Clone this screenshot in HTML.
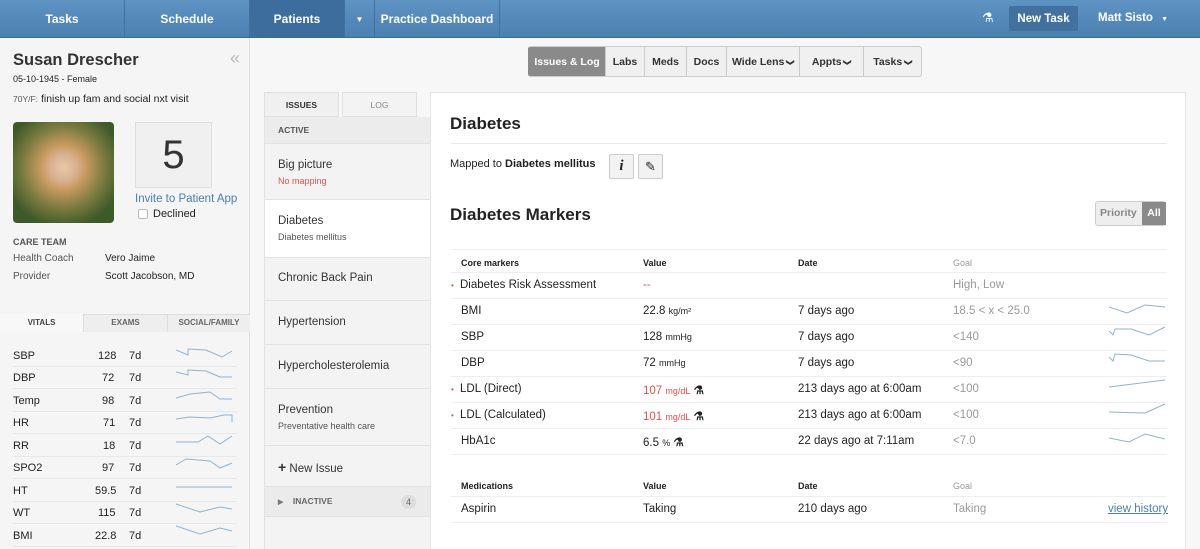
<!DOCTYPE html>
<html><head><meta charset="utf-8"><style>
*{box-sizing:border-box;margin:0;padding:0}
html,body{width:1200px;height:549px;overflow:hidden}
body{font-family:"Liberation Sans",Arial,sans-serif;background:#f7f7f7;color:#222;position:relative;font-size:12px}
.a{position:absolute;white-space:nowrap}
#nav{position:absolute;left:0;top:0;width:1200px;height:38px;background:linear-gradient(#5e93c2,#4b80b2);border-bottom:1px solid #3b6c98}
.ni{position:absolute;top:0;height:37px;line-height:39px;color:#fff;font-weight:bold;font-size:12px;text-align:center;border-right:1px solid #3f72a0;white-space:nowrap}
#side{position:absolute;left:0;top:38px;width:250px;height:511px;background:#f5f5f5;border-right:1px solid #ddd}
.vr{position:absolute;left:13px;width:224px;height:22px;border-bottom:1px solid #e8e8e8;font-size:11px}
.vr span{position:absolute;top:5px}
.it{position:absolute;left:264px;width:166px;border-bottom:1px solid #e2e2e2;background:#f3f3f3;border-left:1px solid #e2e2e2;white-space:nowrap}
.it b{position:absolute;left:13px;font-weight:normal;font-size:11.5px;color:#333}
.it i{position:absolute;left:13px;font-style:normal;font-size:9px;color:#555}
#main{position:absolute;left:430px;top:92px;width:756px;height:457px;background:#fff;border:1px solid #e4e4e4;border-bottom:none}
.tr{position:absolute;left:20px;width:716px;height:26px;border-bottom:1px solid #eee;font-size:11.5px;white-space:nowrap}
.tr span{position:absolute;top:6px}
.th{font-size:9px;font-weight:bold;top:8px!important}
.g{color:#999}.r{color:#d9534f}
small{font-size:9px}
.btn{position:absolute;top:46px;height:31px;line-height:31px;font-size:10.5px;font-weight:bold;color:#333;background:#f0f0f0;border:1px solid #ccc;border-left:none;text-align:center;white-space:nowrap}
.btn b{font-size:8px;display:inline-block;transform:rotate(90deg)}
</style></head><body>
<div id="nav">
<div class="ni" style="left:0;width:125px">Tasks</div>
<div class="ni" style="left:125px;width:125px">Schedule</div>
<div class="ni" style="left:250px;width:95px;background:#3d6d9c">Patients</div>
<div class="ni" style="left:345px;width:30px;font-size:8px">▼</div>
<div class="ni" style="left:375px;width:125px">Practice Dashboard</div>
<div class="a" style="left:982px;top:10px;color:#fff;font-size:13px">⚗</div>
<div class="a" style="left:1009px;top:6px;width:69px;height:25px;line-height:26px;background:#42719f;color:#fff;font-weight:bold;text-align:center;font-size:11.5px;border-radius:2px">New Task</div>
<div class="a" style="left:1098px;top:12px;color:#fff;font-weight:bold;font-size:11.5px">Matt Sisto <span style="font-size:7px;margin-left:5px">▼</span></div>
</div>
<div id="side">
<div class="a" style="left:13px;top:13px;font-size:16.5px;font-weight:bold;color:#333">Susan Drescher</div>
<div class="a" style="left:230px;top:10px;font-size:18px;color:#bbb">«</div>
<div class="a" style="left:13px;top:36px;font-size:9px">05-10-1945 - Female</div>
<div class="a" style="left:13px;top:55px;font-size:10.5px"><span style="font-size:8.5px;color:#555">70Y/F:</span> finish up fam and social nxt visit</div>
<div class="a" style="left:13px;top:84px;width:101px;height:101px;border-radius:4px;background:radial-gradient(circle at 50% 45%,#e8c8a8 0,#d8b090 18%,#c89a60 30%,#7a7a40 55%,#3d5a28 80%)"></div>
<div class="a" style="left:135px;top:84px;width:77px;height:66px;background:#f0f0f0;border:1px solid #ddd;font-size:40px;font-weight:300;text-align:center;line-height:64px;color:#333">5</div>
<div class="a" style="left:135px;top:155px;font-size:11.5px;color:#4a7fb0">Invite to Patient App</div>
<div class="a" style="left:138px;top:171px;width:10px;height:10px;border:1px solid #bbb;border-radius:2px;background:#fff"></div>
<div class="a" style="left:153px;top:170px;font-size:11px">Declined</div>
<div class="a" style="left:13px;top:199px;font-size:9px;font-weight:bold;color:#555">CARE TEAM</div>
<div class="a" style="left:13px;top:215px;font-size:10px;color:#555">Health Coach</div>
<div class="a" style="left:105px;top:215px;font-size:10px">Vero Jaime</div>
<div class="a" style="left:13px;top:233px;font-size:10px;color:#555">Provider</div>
<div class="a" style="left:105px;top:233px;font-size:10px">Scott Jacobson, MD</div>
<div class="a" style="left:0;top:276px;width:250px;height:18px;border-top:1px solid #ddd;background:#eee"></div>
<div class="a" style="left:0;top:276px;width:83px;height:18px;background:#f8f8f8;text-align:center;font-size:8px;font-weight:bold;line-height:18px;color:#444">VITALS</div>
<div class="a" style="left:83px;top:276px;width:84px;height:18px;border-left:1px solid #ddd;text-align:center;font-size:8px;font-weight:bold;line-height:18px;color:#666">EXAMS</div>
<div class="a" style="left:167px;top:276px;width:83px;height:18px;border-left:1px solid #ddd;text-align:center;font-size:8px;font-weight:bold;line-height:18px;color:#666">SOCIAL/FAMILY</div>
</div>
<div class="a" style="left:264px;top:92px;width:75px;height:25px;background:#f0f0f0;border:1px solid #e0e0e0;text-align:center;line-height:25px;font-size:8.5px;font-weight:bold;color:#333">ISSUES</div>
<div class="a" style="left:342px;top:92px;width:75px;height:25px;background:#f3f3f3;border:1px solid #e0e0e0;text-align:center;line-height:25px;font-size:8.5px;color:#888">LOG</div>
<div class="it" style="top:117px;height:27px;background:#ececec"><b style="top:8px;font-size:8.5px;font-weight:bold;color:#555">ACTIVE</b></div>
<div class="it" style="top:144px;height:56px"><b style="top:15px">Big picture</b><i style="top:32px;color:#d9534f">No mapping</i></div>
<div class="it" style="top:200px;height:58px;background:#fff"><b style="top:15px">Diabetes</b><i style="top:32px">Diabetes mellitus</i></div>
<div class="it" style="top:258px;height:43px"><b style="top:14px">Chronic Back Pain</b></div>
<div class="it" style="top:301px;height:44px"><b style="top:15px">Hypertension</b></div>
<div class="it" style="top:345px;height:44px"><b style="top:15px">Hypercholesterolemia</b></div>
<div class="it" style="top:389px;height:57px"><b style="top:15px">Prevention</b><i style="top:32px">Preventative health care</i></div>
<div class="it" style="top:446px;height:41px"><b style="top:13px"><span style="font-weight:bold;font-size:14px">+</span> New Issue</b></div>
<div class="it" style="top:487px;height:30px;background:#ebebeb"><b style="top:9px;font-size:8.5px;font-weight:bold;color:#666"><span style="font-size:7px;color:#777">▶</span>&nbsp;&nbsp;&nbsp; INACTIVE</b><span class="a" style="left:136px;top:8px;width:15px;height:14px;border-radius:7px;background:#ddd;font-size:9px;text-align:center;line-height:14px;color:#666">4</span></div>
<div class="it" style="top:517px;height:40px;background:#f3f3f3"></div>
<div class="btn" style="left:528px;width:78px;background:#8a8a8a;color:#fff;border-left:1px solid #888;border-radius:3px 0 0 3px">Issues &amp; Log</div>
<div class="btn" style="left:606px;width:39px">Labs</div>
<div class="btn" style="left:645px;width:42px">Meds</div>
<div class="btn" style="left:687px;width:40px">Docs</div>
<div class="btn" style="left:727px;width:73px">Wide Lens <b>&#10095;</b></div>
<div class="btn" style="left:800px;width:64px">Appts <b>&#10095;</b></div>
<div class="btn" style="left:864px;width:58px;border-radius:0 3px 3px 0">Tasks <b>&#10095;</b></div>
<div id="main">
<div class="a" style="left:19px;top:21px;font-size:17px;font-weight:bold">Diabetes</div>
<div class="a" style="left:20px;top:50px;width:716px;height:1px;background:#e8e8e8"></div>
<div class="a" style="left:19px;top:65px;font-size:11px">Mapped to <b>Diabetes mellitus</b></div>
<div class="a" style="left:178px;top:61px;width:25px;height:25px;border:1px solid #ccc;background:#f2f2f2;border-radius:2px;text-align:center;line-height:23px;font-weight:bold;font-style:italic;font-family:'Liberation Serif',serif;font-size:15px">i</div>
<div class="a" style="left:207px;top:61px;width:25px;height:25px;border:1px solid #ccc;background:#f2f2f2;border-radius:2px;text-align:center;line-height:23px;font-size:13px">✎</div>
<div class="a" style="left:19px;top:112px;font-size:17px;font-weight:bold">Diabetes Markers</div>
<div class="a" style="left:664px;top:108px;width:71px;height:25px;border:1px solid #ccc;border-radius:3px;background:#eee;font-size:10.5px;font-weight:bold;line-height:23px;color:#888"><span style="padding-left:4px">Priority</span><span class="a" style="left:46px;top:0;width:24px;height:23px;background:#8a8a8a;color:#fff;text-align:center">All</span></div>
<div class="a" style="left:20px;top:156px;width:716px;height:1px;background:#eee"></div>
<div class="tr" style="top:157px;height:23px"><span class="th" style="left:10px">Core markers</span><span class="th" style="left:192px">Value</span><span class="th" style="left:347px">Date</span><span class="th g" style="left:502px;font-weight:normal">Goal</span></div>
<div class="tr" style="top:180px"><span class="r" style="left:0;font-size:8px;top:8px">•</span><span style="left:9px">Diabetes Risk Assessment</span><span class="r" style="left:192px">--</span><span class="g" style="left:502px">High, Low</span></div>
<div class="tr" style="top:206px"><span style="left:10px">BMI</span><span style="left:192px">22.8 <small>kg/m²</small></span><span style="left:347px">7 days ago</span><span class="g" style="left:502px">18.5 &lt; x &lt; 25.0</span></div>
<div class="tr" style="top:232px"><span style="left:10px">SBP</span><span style="left:192px">128 <small>mmHg</small></span><span style="left:347px">7 days ago</span><span class="g" style="left:502px">&lt;140</span></div>
<div class="tr" style="top:258px"><span style="left:10px">DBP</span><span style="left:192px">72 <small>mmHg</small></span><span style="left:347px">7 days ago</span><span class="g" style="left:502px">&lt;90</span></div>
<div class="tr" style="top:284px"><span class="r" style="left:0;font-size:8px;top:8px">•</span><span style="left:9px">LDL (Direct)</span><span class="r" style="left:192px">107 <small>mg/dL</small> <b style="color:#222">⚗</b></span><span style="left:347px">213 days ago at 6:00am</span><span class="g" style="left:502px">&lt;100</span></div>
<div class="tr" style="top:310px"><span class="r" style="left:0;font-size:8px;top:8px">•</span><span style="left:9px">LDL (Calculated)</span><span class="r" style="left:192px">101 <small>mg/dL</small> <b style="color:#222">⚗</b></span><span style="left:347px">213 days ago at 6:00am</span><span class="g" style="left:502px">&lt;100</span></div>
<div class="tr" style="top:336px"><span style="left:10px">HbA1c</span><span style="left:192px">6.5 <small>%</small> <b>⚗</b></span><span style="left:347px">22 days ago at 7:11am</span><span class="g" style="left:502px">&lt;7.0</span></div>
<div class="tr" style="top:380px;height:24px"><span class="th" style="left:10px">Medications</span><span class="th" style="left:192px">Value</span><span class="th" style="left:347px">Date</span><span class="th g" style="left:502px;font-weight:normal">Goal</span></div>
<div class="tr" style="top:404px"><span style="left:10px">Aspirin</span><span style="left:192px">Taking</span><span style="left:347px">210 days ago</span><span class="g" style="left:502px">Taking</span><span style="left:657px;color:#4a7fb0;text-decoration:underline">view history</span></div>
<svg class="a" style="left:678px;top:206px" width="58" height="160" fill="none" stroke="#8fb3cf" stroke-width="1">
<path d="M0 8 L18 14 L36 6 L56 8"/>
<path d="M0 32 L4 36 L6 30 L22 30 L40 36 L56 28"/>
<path d="M0 58 L4 62 L6 55 L22 56 L40 62 L56 62"/>
<path d="M0 88 L56 81"/>
<path d="M0 113 L36 114 L56 105"/>
<path d="M0 139 L20 143 L36 135 L56 140"/>
</svg>
</div>
<div class="vr" style="top:345px"><span style="left:0">SBP</span><span style="left:85px">128</span><span style="left:116px">7d</span></div>
<div class="vr" style="top:367px"><span style="left:0">DBP</span><span style="left:89px">72</span><span style="left:116px">7d</span></div>
<div class="vr" style="top:390px"><span style="left:0">Temp</span><span style="left:89px">98</span><span style="left:116px">7d</span></div>
<div class="vr" style="top:412px"><span style="left:0">HR</span><span style="left:90px">71</span><span style="left:116px">7d</span></div>
<div class="vr" style="top:435px"><span style="left:0">RR</span><span style="left:90px">18</span><span style="left:116px">7d</span></div>
<div class="vr" style="top:457px"><span style="left:0">SPO2</span><span style="left:89px">97</span><span style="left:116px">7d</span></div>
<div class="vr" style="top:480px"><span style="left:0">HT</span><span style="left:82px">59.5</span><span style="left:116px">7d</span></div>
<div class="vr" style="top:502px"><span style="left:0">WT</span><span style="left:85px">115</span><span style="left:116px">7d</span></div>
<div class="vr" style="top:525px"><span style="left:0">BMI</span><span style="left:82px">22.8</span><span style="left:116px">7d</span></div>
<svg class="a" style="left:176px;top:345px" width="58" height="204" fill="none" stroke="#8fb3cf" stroke-width="1">
<path d="M0 5 L12 10 L12 4 L30 5 L46 12 L56 6"/>
<path d="M0 27 L12 30 L12 25 L30 26 L44 32 L56 32"/>
<path d="M0 53 L14 49 L34 47 L44 54 L56 54"/>
<path d="M0 74 L14 72 L34 73 L48 70 L56 70 L56 77"/>
<path d="M0 97 L22 97 L32 91 L44 99 L56 91"/>
<path d="M0 120 L10 114 L34 116 L44 123 L56 118"/>
<path d="M0 142 L56 142"/>
<path d="M0 159 L24 167 L44 162 L56 164"/>
<path d="M0 181 L24 189 L44 183 L56 186"/>
</svg>
</body></html>
